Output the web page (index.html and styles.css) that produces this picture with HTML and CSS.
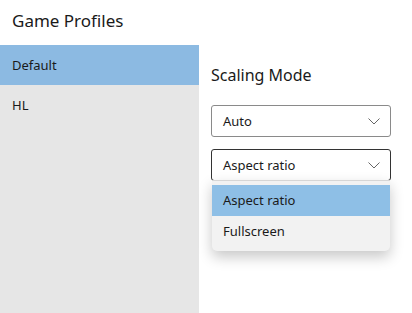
FILE: index.html
```html
<!DOCTYPE html>
<html lang="en">
<head>
  <meta charset="UTF-8" />
  <title>Game Profiles</title>
  <link rel="stylesheet" href="styles.css">
</head>
<body>
  <div class="window">
    <div id="header">Game Profiles</div>

    <div class="content">
      <div class="sidebar">
        <div class="profile selected">Default</div>
        <div class="profile">HL</div>
      </div>

      <div class="settings">
        <h3>Scaling Mode</h3>

        <div class="combo">
          <span>Auto</span>
          <svg class="chevron" width="12" height="7" viewBox="0 0 12 7"><path d="M0.5 0.5 L6 6 L11.5 0.5" fill="none" stroke="#666" stroke-width="1"/></svg>
        </div>

        <div class="combo-wrap">
          <div class="combo open">
            <span>Aspect ratio</span>
            <svg class="chevron" width="12" height="7" viewBox="0 0 12 7"><path d="M0.5 0.5 L6 6 L11.5 0.5" fill="none" stroke="#666" stroke-width="1"/></svg>
          </div>
          <div class="popup">
            <div class="option active">Aspect ratio</div>
            <div class="option">Fullscreen</div>
          </div>
        </div>
      </div>
    </div>
  </div>
</body>
</html>
```

FILE: styles.css
```css
body {
  margin: 0;
  padding: 0;
  font-family: "Noto Sans", "Open Sans", sans-serif;
  color: #1a1a1a;
  background-color: #ffffff;
}
.window {
  width: 412px;
  height: 313px;
  display: flex;
  flex-direction: column;
  overflow: hidden;
}
#header {
  height: 45px;
  box-sizing: border-box;
  padding: 9px 0 0 12px;
  font-size: 17px;
}
.content {
  flex: 1;
  display: flex;
}
.sidebar {
  width: 199px;
  background-color: #e6e6e6;
}
.profile {
  height: 40px;
  line-height: 40px;
  padding-left: 12px;
  font-size: 13px;
}
.profile.selected {
  background-color: #8cbae2;
}
.settings {
  flex: 1;
  padding: 19px 21px 0 12px;
}
.settings h3 {
  margin: 0 0 19px 0;
  font-weight: normal;
  font-size: 16px;
  line-height: 22px;
}
.combo {
  height: 32px;
  box-sizing: border-box;
  border: 1px solid #8a8a8a;
  border-radius: 3px;
  display: flex;
  align-items: center;
  justify-content: space-between;
  padding: 0 10px 0 11px;
  font-size: 13px;
  margin-bottom: 12px;
}
.combo.open {
  border-color: #333;
  margin-bottom: 0;
}
.combo-wrap {
  position: relative;
}
.popup {
  position: absolute;
  top: 31px;
  left: 1px;
  right: 1px;
  background-color: #f2f2f2;
  border-top: 1px solid #d6d6d6;
  border-radius: 0 0 5px 5px;
  padding: 4px 0 1px 0;
  box-shadow: 0 6px 14px rgba(0, 0, 0, 0.22);
}
.option {
  height: 31px;
  line-height: 31px;
  padding-left: 11px;
  font-size: 13px;
}
.option + .option {
  height: 34px;
  line-height: 31px;
}
.option.active {
  background-color: #8ebfe6;
}
```
